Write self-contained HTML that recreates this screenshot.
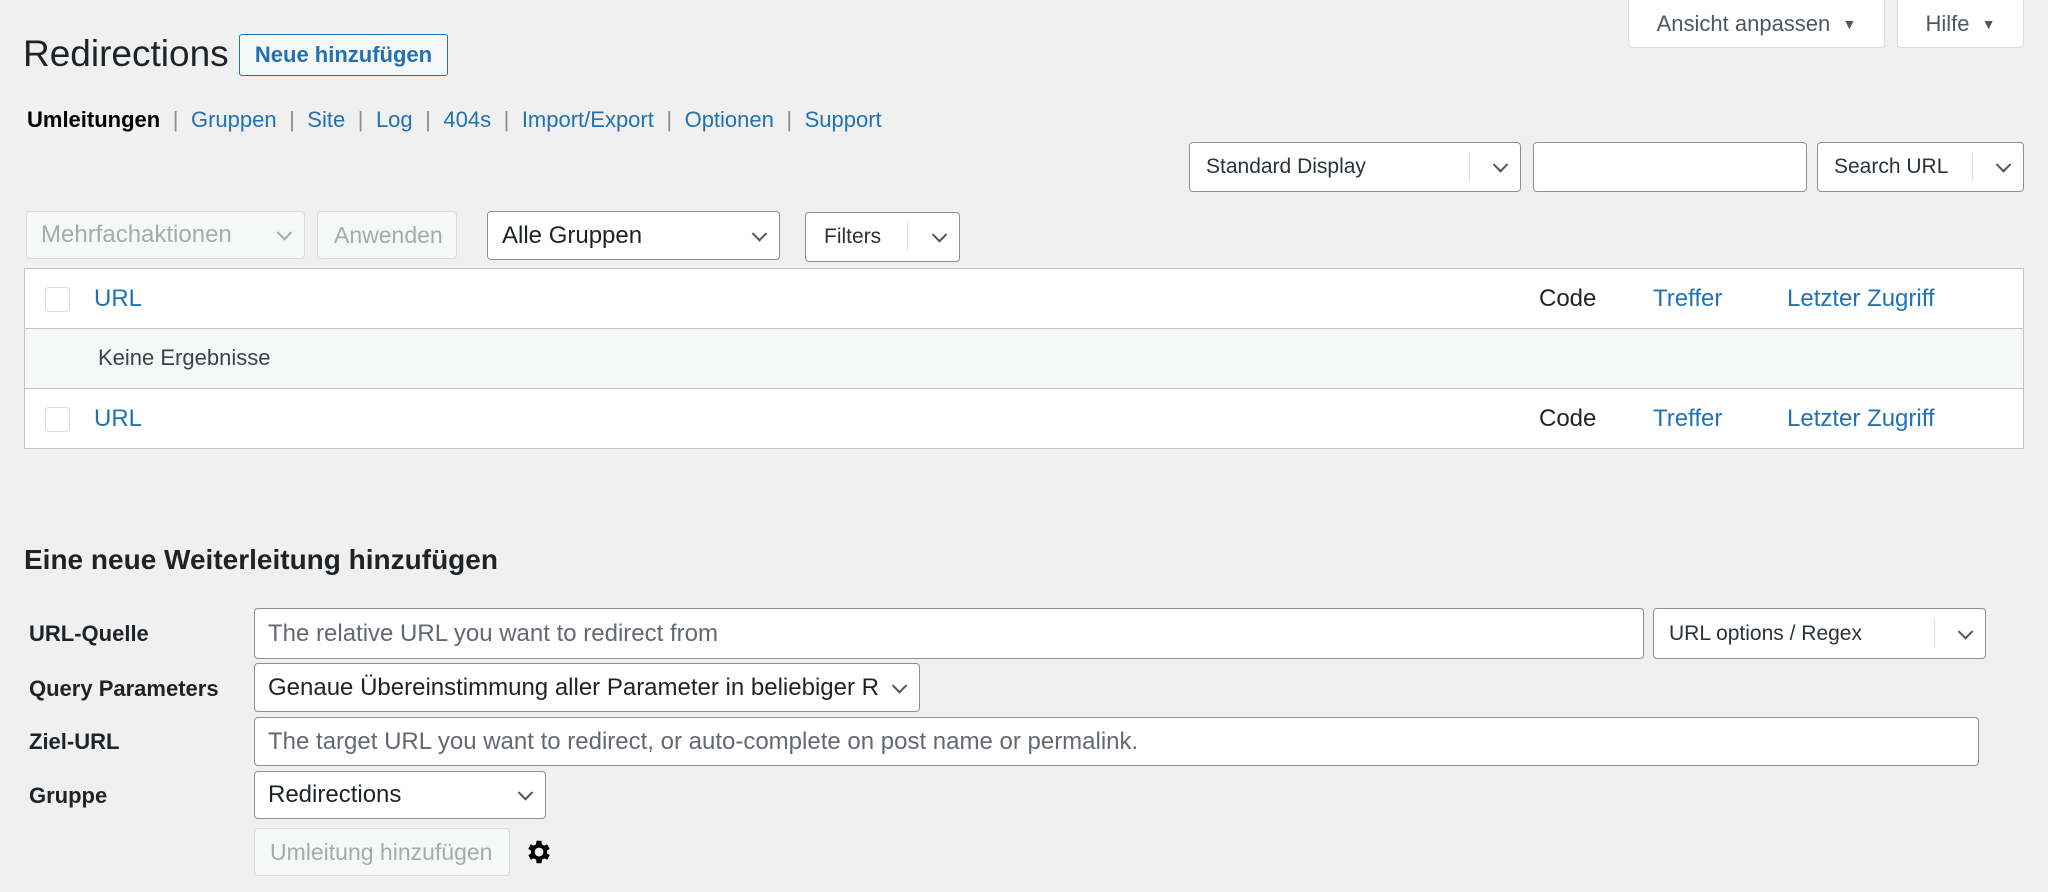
<!DOCTYPE html>
<html><head><meta charset="utf-8"><style>
*{box-sizing:border-box;margin:0;padding:0}
body{width:2048px;height:892px;background:#f0f0f1;font-family:"Liberation Sans",sans-serif;color:#1d2327;position:relative;overflow:hidden;font-size:17px}
.a{position:absolute;white-space:nowrap}
.box{position:absolute;background:#fff;border:1px solid #8c8f94;border-radius:4px;display:flex;align-items:center;padding-left:16px;font-size:21px;color:#2c3338;white-space:nowrap}
.chev{position:absolute;right:14px;top:50%;width:11px;height:11px;border-right:2px solid #50575e;border-bottom:2px solid #50575e;transform:translateY(-70%) rotate(45deg)}
.div{position:absolute;top:10px;bottom:10px;width:1px;background:#dcdcde}
.link{color:#2271b1}
.lbl{position:absolute;left:29px;font-weight:bold;font-size:22px;color:#1d2327}
.sep{margin:0 12.5px;color:#8c8f94}
.th{position:absolute;font-size:24px}
</style></head><body>
<div class="a" style="left:23px;top:32px;font-size:37px;line-height:44px;color:#1d2327">Redirections</div>
<div class="a" style="left:239px;top:34px;width:209px;height:42px;border:1px solid #2271b1;border-radius:3px;background:#f6f7f7;color:#2271b1;font-size:22px;font-weight:bold;display:flex;align-items:center;justify-content:center">Neue hinzufügen</div>
<div class="a" style="left:1628px;top:-5px;width:257px;height:53px;background:#fff;border:1px solid #dcdcde;border-radius:4px;color:#50575e;font-size:22px;display:flex;align-items:center;justify-content:center;padding-top:5px">Ansicht anpassen&nbsp;&nbsp;<span style="font-size:14px">▼</span></div>
<div class="a" style="left:1897px;top:-5px;width:127px;height:53px;background:#fff;border:1px solid #dcdcde;border-radius:4px;color:#50575e;font-size:22px;display:flex;align-items:center;justify-content:center;padding-top:5px">Hilfe&nbsp;&nbsp;<span style="font-size:14px">▼</span></div>
<div class="a" style="left:27px;top:107px;font-size:22px"><b style="color:#000">Umleitungen</b><span class="sep">|</span><span class="link">Gruppen</span><span class="sep">|</span><span class="link">Site</span><span class="sep">|</span><span class="link">Log</span><span class="sep">|</span><span class="link">404s</span><span class="sep">|</span><span class="link">Import/Export</span><span class="sep">|</span><span class="link">Optionen</span><span class="sep">|</span><span class="link">Support</span></div>

<div class="box" style="left:1189px;top:142px;width:332px;height:50px">Standard Display<div class="div" style="left:279px"></div><div class="chev"></div></div>
<div class="box" style="left:1533px;top:142px;width:274px;height:50px"></div>
<div class="box" style="left:1817px;top:142px;width:207px;height:50px">Search URL<div class="div" style="left:154px"></div><div class="chev"></div></div>

<div class="box" style="left:26px;top:211px;width:279px;height:48px;border-color:#dcdcde;background:#f6f7f7;color:#a7aaad;font-size:24px;padding-left:14px">Mehrfachaktionen<div class="chev" style="border-color:#a7aaad"></div></div>
<div class="box" style="left:317px;top:211px;width:140px;height:48px;border-color:#dcdcde;background:#f6f7f7;color:#a7aaad;font-size:23px;padding-left:16px">Anwenden</div>
<div class="box" style="left:487px;top:211px;width:293px;height:49px;font-size:24px;padding-left:14px;color:#1d2327">Alle Gruppen<div class="chev"></div></div>
<div class="box" style="left:805px;top:212px;width:155px;height:50px;padding-left:18px">Filters<div class="div" style="left:101px"></div><div class="chev"></div></div>

<div class="a" style="left:24px;top:268px;width:2000px;height:181px;background:#fff;border:1px solid #c3c4c7">
 <div class="a" style="left:0;top:59px;width:100%;height:61px;background:#f6f7f7;border-top:1px solid #c3c4c7;border-bottom:1px solid #c3c4c7"></div>
 <div class="a" style="left:20px;top:18px;width:25px;height:25px;border:1px solid #dcdcde;border-radius:4px"></div>
 <div class="th link" style="left:69px;top:16px">URL</div>
 <div class="th" style="left:1514px;top:16px">Code</div>
 <div class="th link" style="left:1628px;top:16px">Treffer</div>
 <div class="th link" style="left:1762px;top:16px">Letzter Zugriff</div>
 <div class="a" style="left:73px;top:76px;font-size:22px;color:#3c434a">Keine Ergebnisse</div>
 <div class="a" style="left:20px;top:138px;width:25px;height:25px;border:1px solid #dcdcde;border-radius:4px"></div>
 <div class="th link" style="left:69px;top:136px">URL</div>
 <div class="th" style="left:1514px;top:136px">Code</div>
 <div class="th link" style="left:1628px;top:136px">Treffer</div>
 <div class="th link" style="left:1762px;top:136px">Letzter Zugriff</div>
</div>

<div class="a" style="left:24px;top:544px;font-size:28px;font-weight:bold;color:#1d2327">Eine neue Weiterleitung hinzufügen</div>

<div class="lbl" style="top:621px">URL-Quelle</div>
<div class="lbl" style="top:676px">Query Parameters</div>
<div class="lbl" style="top:729px">Ziel-URL</div>
<div class="lbl" style="top:783px">Gruppe</div>

<div class="box" style="left:254px;top:608px;width:1390px;height:51px;font-size:24px;color:#646970;padding-left:13px">The relative URL you want to redirect from</div>
<div class="box" style="left:1653px;top:608px;width:333px;height:51px;padding-left:15px">URL options / Regex<div class="div" style="left:280px"></div><div class="chev"></div></div>
<div class="box" style="left:254px;top:663px;width:666px;height:49px;font-size:24px;color:#1d2327;padding-left:13px;overflow:hidden"><span style="width:612px;overflow:hidden;display:inline-block">Genaue Übereinstimmung aller Parameter in beliebiger Reihenfolge</span><div class="chev"></div></div>
<div class="box" style="left:254px;top:717px;width:1725px;height:49px;font-size:24px;color:#646970;padding-left:13px">The target URL you want to redirect, or auto-complete on post name or permalink.</div>
<div class="box" style="left:254px;top:771px;width:292px;height:48px;font-size:24px;color:#1d2327;padding-left:13px">Redirections<div class="chev"></div></div>
<div class="box" style="left:254px;top:828px;width:256px;height:48px;border-color:#dcdcde;background:#f6f7f7;color:#a7aaad;font-size:23px;padding-left:15px">Umleitung hinzufügen</div>
<svg class="a" style="left:524px;top:837px" width="30" height="30" viewBox="0 0 24 24"><path fill="#000" d="M19.4 13a7.5 7.5 0 0 0 0-2l2.1-1.6-2-3.5-2.5 1a7 7 0 0 0-1.7-1L15 3h-4l-.4 2.9a7 7 0 0 0-1.7 1l-2.5-1-2 3.5L6.6 11a7.5 7.5 0 0 0 0 2l-2.1 1.6 2 3.5 2.5-1a7 7 0 0 0 1.7 1L11 21h4l.4-2.9a7 7 0 0 0 1.7-1l2.5 1 2-3.5zM13 15.5a3.5 3.5 0 1 1 0-7 3.5 3.5 0 0 1 0 7z" transform="translate(-1 0)"/></svg>
</body></html>
